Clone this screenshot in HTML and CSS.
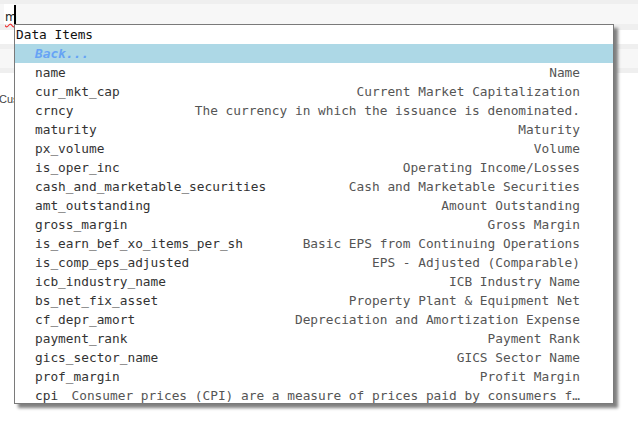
FILE: index.html
```html
<!doctype html>
<html>
    <head>
        <link rel="stylesheet" href="styles.css">
    </head>
    <body>
        <div class="page">
            <div class="band grey h4"></div>
            <div class="band light inputRow">
                <span class="field"><span class="typed">m</span></span><span class="caret"></span>
            </div>
            <div class="band grey h6"></div>
            <div class="band white h14"></div>
            <div class="band grey h5"></div>
            <div class="band light h19"></div>
            <div class="band grey h5"></div>
            <div class="band white rest">
                <div class="behind">Custom</div>
            </div>
        </div>

        <div class="popup">
            <div class="head">Data Items</div>
            <div class="row back"><span class="key">Back...</span></div>
            <div class="row"><span class="key">name</span><span class="desc">Name</span></div>
            <div class="row"><span class="key">cur_mkt_cap</span><span class="desc">Current Market Capitalization</span></div>
            <div class="row"><span class="key">crncy</span><span class="desc">The currency in which the issuance is denominated.</span></div>
            <div class="row"><span class="key">maturity</span><span class="desc">Maturity</span></div>
            <div class="row"><span class="key">px_volume</span><span class="desc">Volume</span></div>
            <div class="row"><span class="key">is_oper_inc</span><span class="desc">Operating Income/Losses</span></div>
            <div class="row"><span class="key">cash_and_marketable_securities</span><span class="desc">Cash and Marketable Securities</span></div>
            <div class="row"><span class="key">amt_outstanding</span><span class="desc">Amount Outstanding</span></div>
            <div class="row"><span class="key">gross_margin</span><span class="desc">Gross Margin</span></div>
            <div class="row"><span class="key">is_earn_bef_xo_items_per_sh</span><span class="desc">Basic EPS from Continuing Operations</span></div>
            <div class="row"><span class="key">is_comp_eps_adjusted</span><span class="desc">EPS - Adjusted (Comparable)</span></div>
            <div class="row"><span class="key">icb_industry_name</span><span class="desc">ICB Industry Name</span></div>
            <div class="row"><span class="key">bs_net_fix_asset</span><span class="desc">Property Plant &amp; Equipment Net</span></div>
            <div class="row"><span class="key">cf_depr_amort</span><span class="desc">Depreciation and Amortization Expense</span></div>
            <div class="row"><span class="key">payment_rank</span><span class="desc">Payment Rank</span></div>
            <div class="row"><span class="key">gics_sector_name</span><span class="desc">GICS Sector Name</span></div>
            <div class="row"><span class="key">prof_margin</span><span class="desc">Profit Margin</span></div>
            <div class="row"><span class="key">cpi</span><span class="desc">Consumer prices (CPI) are a measure of prices paid by consumers f…</span></div>
        </div>
    </body>
</html>
```

FILE: styles.css
```css
body
{
    margin: 0;
    background: #fff;
    font-family: "Open Sans", "DejaVu Sans", sans-serif;
}
.page
{
    width: 638px;
    height: 430px;
    overflow: hidden;
}
.band.grey { background: #efefef; }
.band.light { background: #f7f7f7; }
.band.white { background: #fff; }
.h4 { height: 4px; }
.h5 { height: 5px; }
.h6 { height: 6px; }
.h14 { height: 14px; }
.h19 { height: 19px; }
.rest { height: 357px; }

.inputRow
{
    height: 20px;
    display: flex;
    padding-left: 4px;
}
.field
{
    background: #fff;
    width: 10px;
    height: 20px;
}
.typed
{
    font-family: "DejaVu Sans", sans-serif;
    font-size: 12px;
    color: #222;
    line-height: 18px;
    padding-left: 1px;
    text-decoration: underline wavy #e33;
    text-underline-offset: 2px;
}
.caret
{
    width: 2px;
    height: 19px;
    background: #000;
    margin-top: 1px;
}

.behind
{
    padding-top: 20px;
    margin-left: -1px;
    font-family: "Liberation Sans", sans-serif;
    font-size: 11px;
    color: #444;
}

.popup
{
    position: absolute;
    left: 14px;
    top: 24px;
    width: 598px;
    height: 378px;
    border: 1px solid #7a7a7a;
    background: #fff;
    box-shadow: 4px 4px 3px #808080;
    overflow: hidden;
    font-family: "DejaVu Sans Mono", monospace;
    font-size: 12.8px;
}
.head
{
    height: 19px;
    line-height: 19px;
    padding-left: 1px;
    color: #111;
}
.row
{
    display: flex;
    gap: 12px;
    height: 19px;
    line-height: 19px;
    padding: 0 33px 0 20px;
    color: #333;
    white-space: nowrap;
}
.row .key
{
    flex: none;
}
.row .desc
{
    flex: 1;
    text-align: right;
    color: #555;
}
.row.back
{
    background: #add8e6;
}
.row.back .key
{
    color: #66a3f5;
    font-style: italic;
    font-weight: bold;
}
```
